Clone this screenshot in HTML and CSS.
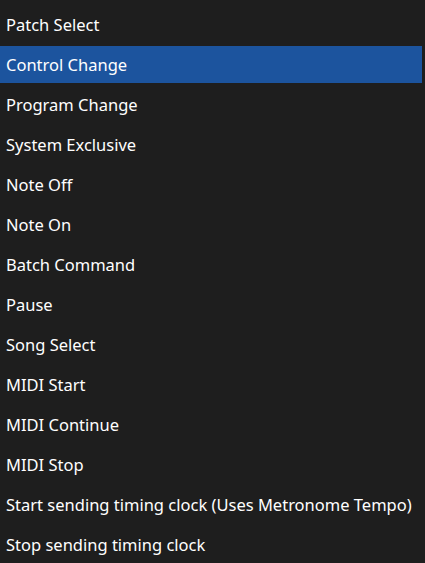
FILE: index.html
```html
<!DOCTYPE html>
<html>
<head>
<meta charset="utf-8">
<link rel="stylesheet" href="styles.css">
</head>
<body>
<ul class="menu">
  <li class="item">Patch Select</li>
  <li class="item selected">Control Change</li>
  <li class="item">Program Change</li>
  <li class="item">System Exclusive</li>
  <li class="item">Note Off</li>
  <li class="item">Note On</li>
  <li class="item">Batch Command</li>
  <li class="item">Pause</li>
  <li class="item">Song Select</li>
  <li class="item">MIDI Start</li>
  <li class="item">MIDI Continue</li>
  <li class="item">MIDI Stop</li>
  <li class="item">Start sending timing clock (Uses Metronome Tempo)</li>
  <li class="item">Stop sending timing clock</li>
</ul>
</body>
</html>
```

FILE: styles.css
```css
html, body {
  margin: 0;
  padding: 0;
  background: #1e1e1e;
  height: 100%;
  overflow: hidden;
}
.menu {
  list-style: none;
  margin: 0;
  padding: 4px 0 0 0;
  display: flex;
  flex-direction: column;
  font-family: "Noto Sans", sans-serif;
  font-size: 16.5px;
  color: #ffffff;
}
.item {
  height: 37px;
  line-height: 37px;
  margin: 2px 3px 1px 0;
  padding-left: 6px;
  white-space: nowrap;
}
.item.selected {
  background: #1c549e;
}
```
